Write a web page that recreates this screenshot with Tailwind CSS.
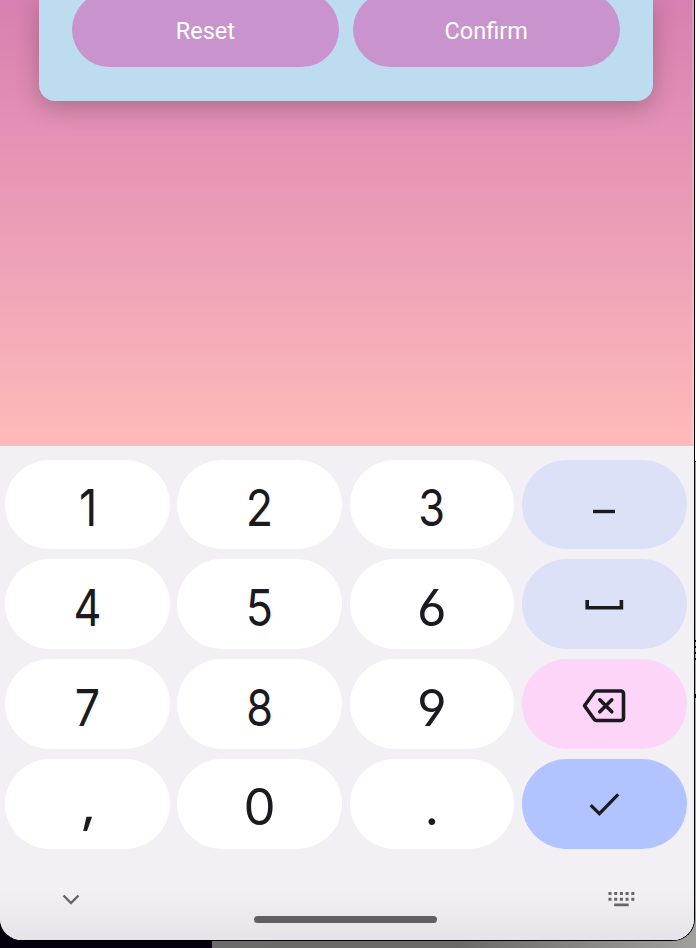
<!DOCTYPE html>
<html lang="en">
  <head>
    <meta charset="UTF-8" />
    <meta name="viewport" content="width=device-width, initial-scale=1.0" />
    <title>Number input</title>
    <script src="https://cdn.jsdelivr.net/npm/@tailwindcss/browser@4"></script>
  </head>
  <body class="overflow-hidden bg-white">
    <div class="relative h-[948px] w-[696px] overflow-hidden">
      <!-- desktop behind the device -->
      <div class="absolute inset-0 flex flex-col">
        <div class="h-[461px] bg-white"></div>
        <div class="flex flex-1 flex-col items-end border-t border-black bg-[#a5a5a5] pt-[178px]">
          <div class="h-0.5 w-1 bg-black"></div>
          <div class="mt-1 h-0.5 w-1 bg-black"></div>
          <div class="mt-1 h-0.5 w-1 bg-black"></div>
          <div class="mt-1 h-0.5 w-1 bg-black"></div>
          <div class="mt-[34px] h-1 w-1 bg-black"></div>
        </div>
        <div class="flex h-[40px]">
          <div class="w-[212px] bg-[#06000f]"></div>
          <div class="flex-1 bg-linear-to-r from-[#6b6b6b] via-[#6a6966] to-[#a0a09c]"></div>
        </div>
      </div>

      <!-- device screen -->
      <div class="relative flex h-[941px] w-[695px] flex-col overflow-hidden rounded-b-[22px] border-r border-b border-black bg-[#f2f0f5] font-['Roboto',sans-serif]">
        <div class="h-[446px] overflow-hidden border-r-2 border-white/20 bg-linear-to-b from-[#d780b1] to-[#ffbaba]">
          <div class="mr-[39px] ml-[38.5px] flex h-[101px] items-end gap-3.5 rounded-b-2xl bg-[#bddcf0] px-[33.5px] pb-[34px] shadow-[0_6px_24px_rgba(0,0,0,0.24)]">
            <button class="h-[75px] flex-1 rounded-full bg-[#c994ce] pt-1 text-[23.5px] text-white">Reset</button>
            <button class="h-[75px] flex-1 rounded-full bg-[#c994ce] pt-1 text-[23.5px] text-white">Confirm</button>
          </div>
        </div>

        <!-- keypad -->
        <div class="flex flex-1 flex-col bg-linear-to-b from-[#f2f0f5] from-90% to-[#e6e4e8]">
          <div class="grid grid-cols-4 gap-x-[7.5px] gap-y-[10.4px] pt-[13.5px] pr-[7.5px] pl-[5px] font-['Inter',sans-serif] text-[51px] leading-none text-[#1b1b1f]">
            <button class="h-[89.5px] rounded-full bg-white pt-1.5"><span class="inline-block scale-x-88 pl-0.5">1</span></button>
            <button class="h-[89.5px] rounded-full bg-white pt-1.5"><span class="inline-block scale-x-88">2</span></button>
            <button class="h-[89.5px] rounded-full bg-white pt-1.5"><span class="inline-block scale-x-85">3</span></button>
            <button class="flex h-[89.5px] items-center justify-center rounded-full bg-[#dde1f7]">
              <svg class="h-12 w-12" viewBox="0 0 48 48" fill="none" stroke="currentColor" stroke-width="3.4"><path d="M13 31.500h22" /></svg>
            </button>

            <button class="h-[89.5px] rounded-full bg-white pt-1.5"><span class="inline-block scale-x-85">4</span></button>
            <button class="h-[89.5px] rounded-full bg-white pt-1.5"><span class="inline-block scale-x-88">5</span></button>
            <button class="h-[89.5px] rounded-full bg-white pt-1.5"><span class="inline-block [font-feature-settings:'ss01','cv03']">6</span></button>
            <button class="flex h-[89.5px] items-center justify-center rounded-full bg-[#dde1f7]">
              <svg class="h-12 w-12" viewBox="0 0 48 48" fill="none" stroke="currentColor" stroke-width="3.6"><path d="M7.200 20v7.800h34.200V20" /></svg>
            </button>

            <button class="h-[89.5px] rounded-full bg-white pt-1.5"><span class="inline-block scale-x-88">7</span></button>
            <button class="h-[89.5px] rounded-full bg-white pt-1.5"><span class="inline-block scale-x-85">8</span></button>
            <button class="h-[89.5px] rounded-full bg-white pt-1.5"><span class="inline-block [font-feature-settings:'ss01','cv04']">9</span></button>
            <button class="flex h-[89.5px] items-center justify-center rounded-full bg-[#fdd5f8]">
              <svg class="h-12 w-12" viewBox="0 0 48 48" fill="none" stroke="currentColor" stroke-width="3.6" stroke-linejoin="round"><path d="M16.500 11H41a2.500 2.500 0 0 1 2.500 2.500V38a2.500 2.500 0 0 1-2.500 2.500H16.500q-1.500 0-2.300-1.300L4.500 25.800l9.700-13.500Q15 11 16.500 11z" /><path d="M19.800 19.800l12 12m0-12l-12 12" stroke-linecap="round" /></svg>
            </button>

            <button class="h-[89.5px] rounded-full bg-white pl-1"><span class="inline-block -skew-x-3 scale-x-110">,</span></button>
            <button class="h-[89.5px] rounded-full bg-white pt-1.5"><span class="inline-block">0</span></button>
            <button class="h-[89.5px] rounded-full bg-white pt-1.5"><span class="inline-block">.</span></button>
            <button class="flex h-[89.5px] items-center justify-center rounded-full bg-[#b1c4ff]">
              <svg class="h-12 w-12" viewBox="0 0 48 48" fill="none" stroke="currentColor" stroke-width="3.2"><path d="M10.700 25.200l8.700 8.500 18.800-19.300" /></svg>
            </button>
          </div>

          <!-- navigation bar -->
          <div class="mt-auto flex h-[91px] items-start justify-between pr-[58px] pl-[60px] text-[#66656a]">
            <svg class="mt-[38px] h-6 w-[22px]" viewBox="0 0 22 24" fill="none" stroke="currentColor" stroke-width="2.4"><path d="M3.500 8.500l7.500 7.500L18.500 8.500" /></svg>
            <div class="mt-[67px] ml-px h-[7px] w-[183px] rounded-full bg-[#606063]"></div>
            <svg class="mt-[42px] h-4 w-[28px]" viewBox="0 0 28 16" fill="none" stroke="currentColor" stroke-width="3"><path d="M.5 2.500h26M.5 8.200h26" stroke-dasharray="3 2.700" /><path d="M6.200 13.900h14.500" stroke-width="2.600" /></svg>
          </div>
        </div>
      </div>
    </div>
  </body>
</html>
